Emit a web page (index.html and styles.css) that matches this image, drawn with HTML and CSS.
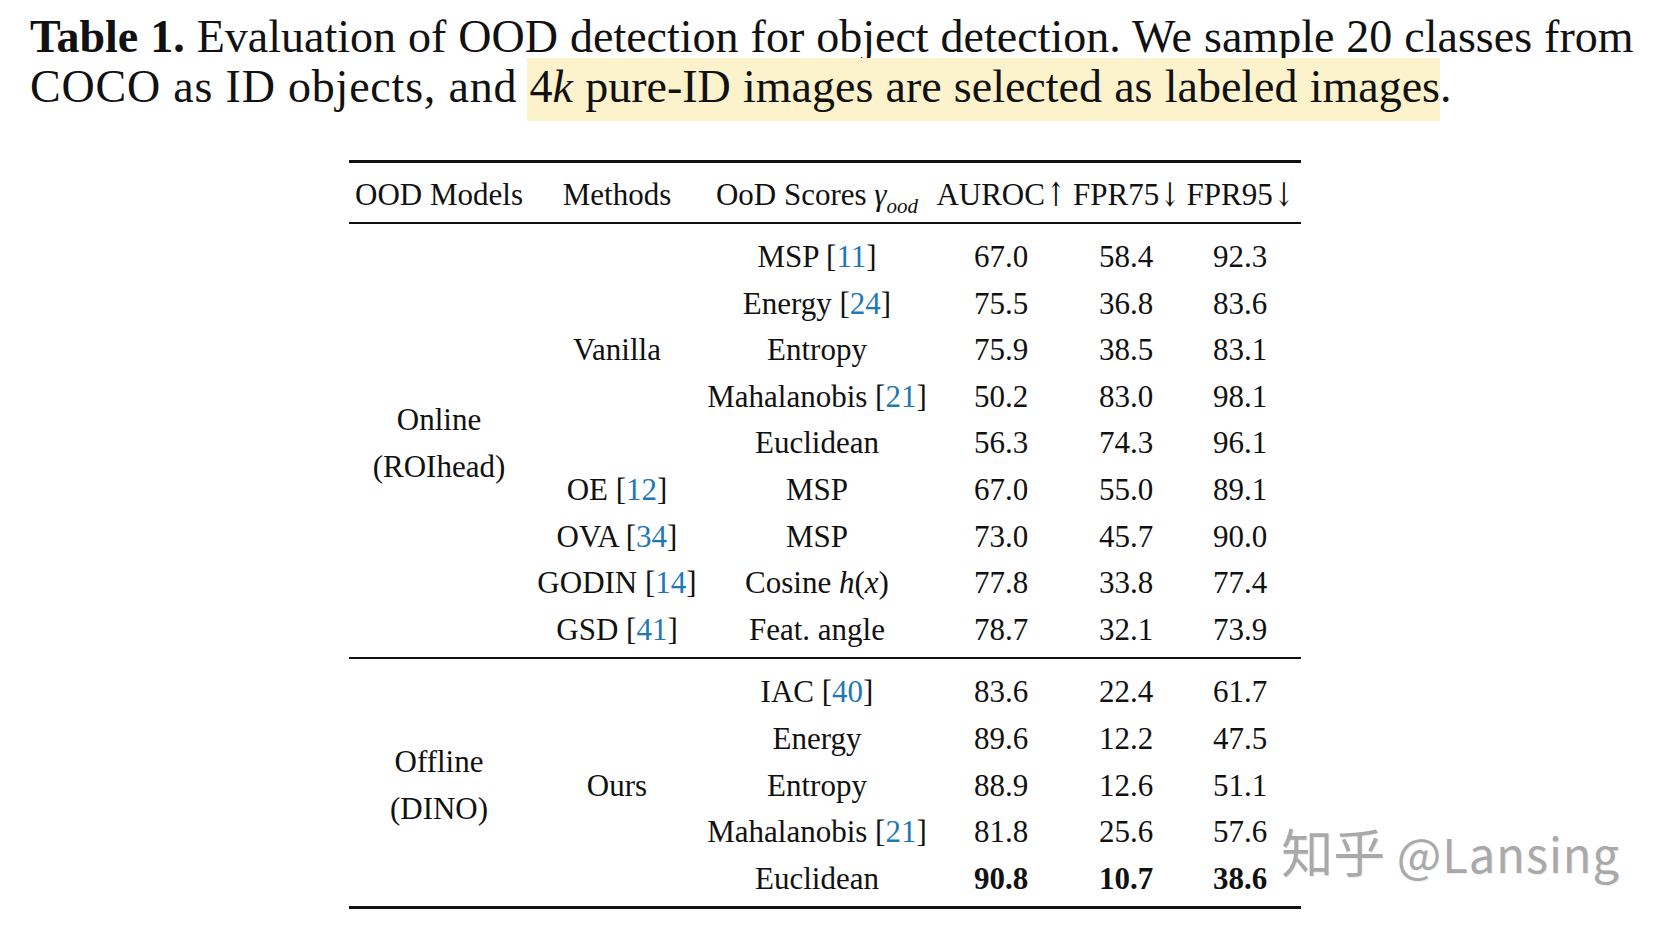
FILE: index.html
```html
<!DOCTYPE html>
<html lang="en">
<head>
<meta charset="utf-8">
<title>Table 1</title>
<link rel="stylesheet" href="styles.css">
</head>
<body>
<div class="page">
  <p class="caption"><span class="line1"><b>Table 1.</b> Evaluation of OOD detection for object detection. We sample 20 classes from</span><br><span class="lead">COCO as ID objects, and </span><span class="hl">4<i>k</i> pure-ID images are selected as labeled images</span>.</p>

  <table class="results">
    <colgroup>
      <col class="c1"><col class="c2"><col class="c3"><col class="c4"><col class="c5"><col class="c6">
    </colgroup>
    <thead>
      <tr>
        <th>OOD Models</th>
        <th>Methods</th>
        <th>OoD Scores <i>γ</i><sub><i>ood</i></sub></th>
        <th>AUROC<span class="arrow">↑</span></th>
        <th>FPR75<span class="arrow">↓</span></th>
        <th>FPR95<span class="arrow">↓</span></th>
      </tr>
    </thead>
    <tbody>
      <tr class="g-first">
        <td rowspan="9" class="span-end">Online<br>(ROIhead)</td>
        <td rowspan="5">Vanilla</td>
        <td>MSP [<span class="ref">11</span>]</td><td>67.0</td><td>58.4</td><td>92.3</td>
      </tr>
      <tr><td>Energy [<span class="ref">24</span>]</td><td>75.5</td><td>36.8</td><td>83.6</td></tr>
      <tr><td>Entropy</td><td>75.9</td><td>38.5</td><td>83.1</td></tr>
      <tr><td>Mahalanobis [<span class="ref">21</span>]</td><td>50.2</td><td>83.0</td><td>98.1</td></tr>
      <tr><td>Euclidean</td><td>56.3</td><td>74.3</td><td>96.1</td></tr>
      <tr><td>OE [<span class="ref">12</span>]</td><td>MSP</td><td>67.0</td><td>55.0</td><td>89.1</td></tr>
      <tr><td>OVA [<span class="ref">34</span>]</td><td>MSP</td><td>73.0</td><td>45.7</td><td>90.0</td></tr>
      <tr><td>GODIN [<span class="ref">14</span>]</td><td>Cosine <i>h</i>(<i>x</i>)</td><td>77.8</td><td>33.8</td><td>77.4</td></tr>
      <tr class="g-last"><td>GSD [<span class="ref">41</span>]</td><td>Feat. angle</td><td>78.7</td><td>32.1</td><td>73.9</td></tr>
    </tbody>
    <tbody class="final">
      <tr class="g-first">
        <td rowspan="5" class="span-end">Offline<br>(DINO)</td>
        <td rowspan="5" class="span-end">Ours</td>
        <td>IAC [<span class="ref">40</span>]</td><td>83.6</td><td>22.4</td><td>61.7</td>
      </tr>
      <tr><td>Energy</td><td>89.6</td><td>12.2</td><td>47.5</td></tr>
      <tr><td>Entropy</td><td>88.9</td><td>12.6</td><td>51.1</td></tr>
      <tr><td>Mahalanobis [<span class="ref">21</span>]</td><td>81.8</td><td>25.6</td><td>57.6</td></tr>
      <tr class="g-last"><td>Euclidean</td><td class="best">90.8</td><td class="best">10.7</td><td class="best">38.6</td></tr>
    </tbody>
  </table>

  <div class="watermark"><span class="wm-cjk">知乎</span> @Lansing</div>
</div>
</body>
</html>
```

FILE: styles.css
```css
html, body {
  margin: 0;
  padding: 0;
  background: #ffffff;
}

.page {
  position: relative;
  width: 1660px;
  height: 926px;
  overflow: hidden;
  font-family: "Liberation Serif", "Times New Roman", serif;
  color: #111111;
}

.caption {
  margin: 0;
  padding: 12px 0 0 30px;
  font-size: 46px;
  line-height: 50px;
  white-space: nowrap;
}

.caption b {
  font-weight: bold;
}

.line1 {
  word-spacing: 0.5px;
}

.lead {
  letter-spacing: 0.8px;
}

.hl {
  background: #fcf2cc;
  padding: 3px 0 9px 3px;
  margin-left: -3px;
  word-spacing: 0.7px;
}

.results {
  margin: 48px 0 0 349px;
  width: 952px;
  table-layout: fixed;
  border-collapse: collapse;
  border-top: 3px solid #111;
  border-bottom: 3px solid #111;
  font-size: 31px;
}

.results col.c1 { width: 180px; }
.results col.c2 { width: 176px; }
.results col.c3 { width: 224px; }
.results col.c4 { width: 144px; }
.results col.c5 { width: 106px; }
.results col.c6 { width: 122px; }

.results th,
.results td {
  padding: 0;
  text-align: center;
  vertical-align: middle;
  white-space: nowrap;
  font-weight: normal;
}

.results thead th {
  line-height: 46px;
  padding-top: 9px;
  padding-bottom: 4px;
  border-bottom: 2px solid #111;
}

.results th sub {
  font-size: 21px;
  line-height: 0;
  vertical-align: -8px;
}

.arrow {
  font-family: "DejaVu Serif", serif;
  font-size: 33px;
  line-height: 0;
  display: inline-block;
  transform: scaleX(0.7);
  margin: 0 -4px 0 -3px;
  vertical-align: -1px;
}

.results td {
  line-height: 46.6px;
}

.results tbody {
  border-bottom: 2px solid #111;
}

.results tbody.final {
  border-bottom: 3px solid #111;
}

.results tr.g-first td {
  padding-top: 10px;
}

.results tr.g-last td,
.results td.span-end {
  padding-bottom: 4px;
}

.ref {
  color: #1f78b4;
}

.results td.best {
  font-weight: bold;
}

.watermark {
  position: absolute;
  right: 40px;
  top: 824px;
  font-family: "Noto Sans CJK SC", "Noto Sans", sans-serif;
  font-size: 47px;
  line-height: 54px;
  color: #a9a9a9;
  letter-spacing: 1px;
  text-shadow: 1px 1px 0 #eeeeee, -1px -1px 0 #ffffff;
}

.wm-cjk {
  font-size: 52px;
  letter-spacing: 0;
}
```
